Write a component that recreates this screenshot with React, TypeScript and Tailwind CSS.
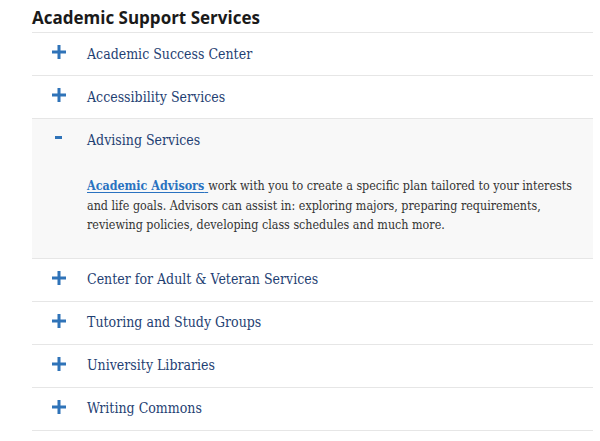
import React, { useState } from 'react';

interface Service {
    title: string;
    body?: React.ReactNode;
}

const services: Service[] = [
    { title: 'Academic Success Center' },
    { title: 'Accessibility Services' },
    {
        title: 'Advising Services',
        body: (
            <>
                <a href="#" className="font-bold text-[#2a72c0] underline underline-offset-2 decoration-1">
                    Academic Advisors{' '}
                </a>
                work with you to create a specific plan tailored to your interests and life goals. Advisors can
                assist in: exploring majors, preparing requirements, reviewing policies, developing class
                schedules and much more.
            </>
        ),
    },
    { title: 'Center for Adult & Veteran Services' },
    { title: 'Tutoring and Study Groups' },
    { title: 'University Libraries' },
    { title: 'Writing Commons' },
];

function PlusIcon() {
    return (
        <svg width="14" height="14" viewBox="0 0 14 14" className="shrink-0">
            <rect x="5.5" y="0" width="3" height="14" fill="#2f73b8" />
            <rect x="0" y="5.5" width="14" height="3" fill="#2f73b8" />
        </svg>
    );
}

function MinusIcon() {
    return (
        <svg width="14" height="14" viewBox="0 0 14 14" className="shrink-0">
            <rect x="3" y="5" width="7" height="3" fill="#2f73b8" />
        </svg>
    );
}

export default function App() {
    const [open, setOpen] = useState<number>(2);

    return (
        <div className="w-[600px] h-[441px] bg-white pt-[6px] pl-[32px] pr-[7px]">
            <h2 className="text-[17px] font-bold text-[#1a1a1a] leading-[24px] mb-[2px]" style={{ fontFamily: '"Open Sans", sans-serif' }}>
                Academic Support Services
            </h2>
            <div className="border-t border-[#e6e6e6]" style={{ fontFamily: '"DejaVu Serif Condensed", "DejaVu Serif", serif' }}>
                {services.map((s, i) => {
                    const isOpen = open === i;
                    return (
                        <div key={s.title} className={`border-b border-[#e6e6e6] ${isOpen ? 'bg-[#f8f8f8]' : ''}`}>
                            <button
                                onClick={() => setOpen(isOpen ? -1 : i)}
                                className="flex items-center w-full h-[42px] pl-[20px] gap-[21px] text-left"
                            >
                                <span className="-mt-[4px]">{isOpen ? <MinusIcon /> : <PlusIcon />}</span>
                                <span className="text-[14px] text-[#1f3f73]">{s.title}</span>
                            </button>
                            {isOpen && s.body && (
                                <div className="pl-[55px] pr-[14px] pt-[15px] pb-[23px] text-[12.4px] leading-[19.5px] text-[#333333]">
                                    {s.body}
                                </div>
                            )}
                        </div>
                    );
                })}
            </div>
        </div>
    );
}
